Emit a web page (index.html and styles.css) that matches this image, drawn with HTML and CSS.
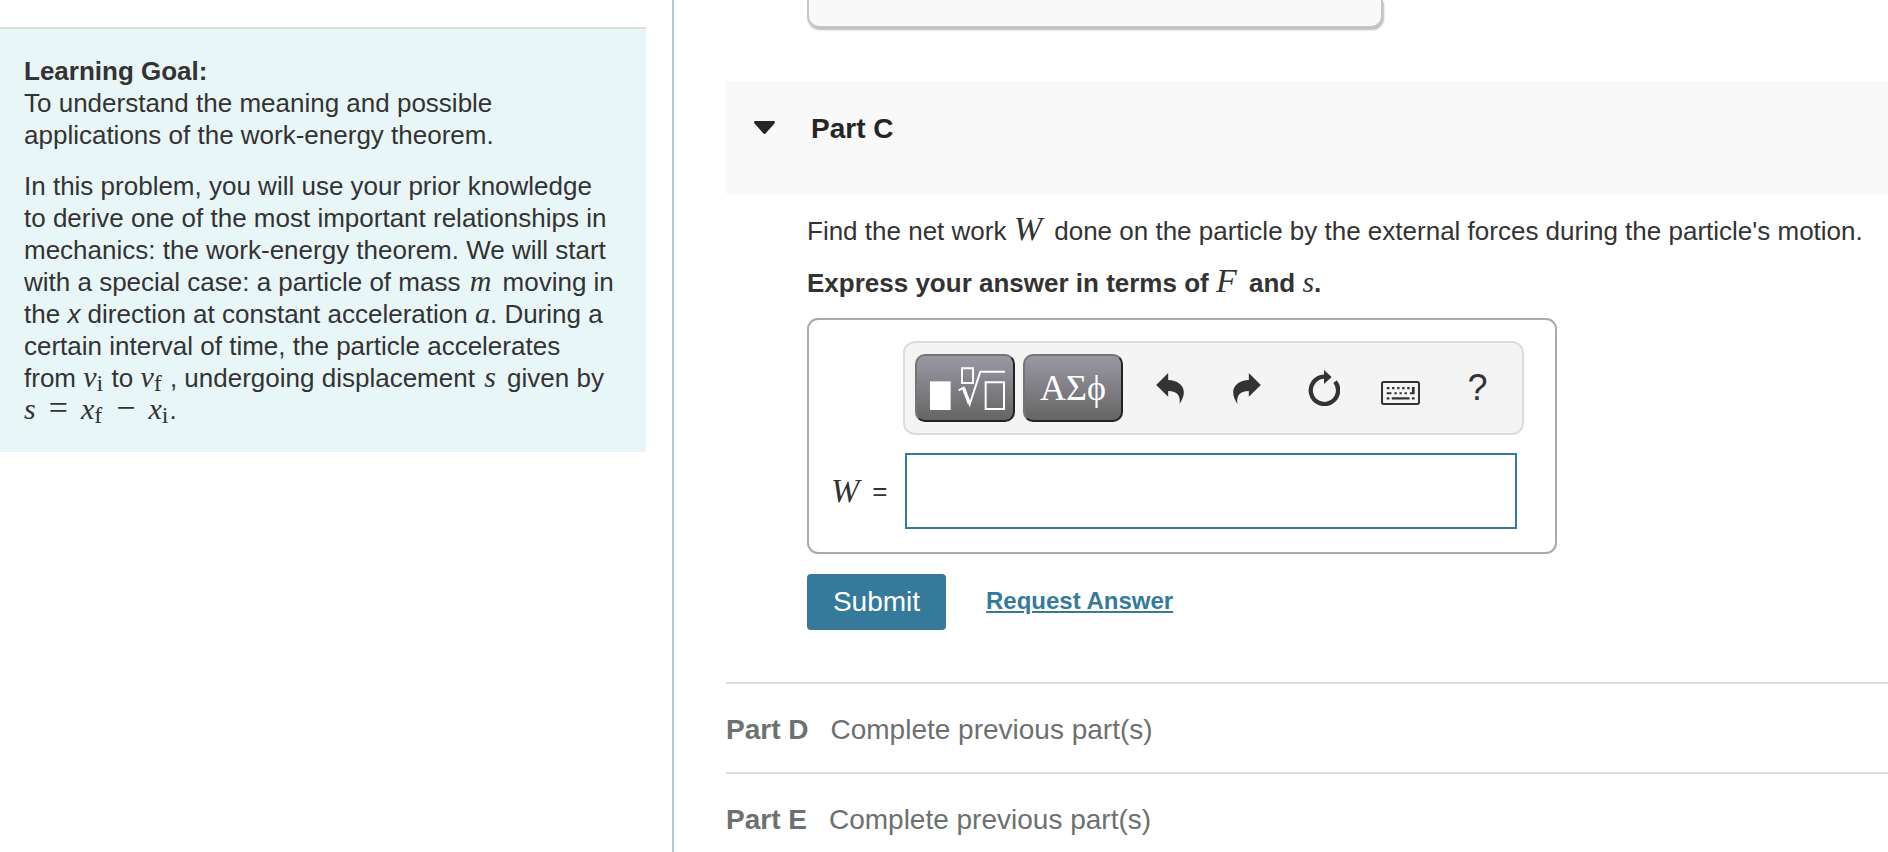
FILE: index.html
```html
<!DOCTYPE html>
<html lang="en">
<head>
<meta charset="utf-8">
<title>Work-Energy Theorem</title>
<link rel="stylesheet" href="styles.css">
</head>
<body>
<div class="layout">
  <aside class="sidebar">
    <section class="goal">
      <p><strong>Learning Goal:</strong><br>To understand the meaning and possible applications of the work-energy theorem.</p>
      <p>In this problem, you will use your prior knowledge to derive one of the most important relationships in mechanics: the work-energy theorem. We will start with a special case: a particle of mass <i class="math wide">m</i> moving in the <em>x</em> direction at constant acceleration <i class="math">a</i>. During a certain interval of time, the particle accelerates from <i class="math">v</i><span class="sub">i</span> to <i class="math">v</i><span class="sub">f</span> , undergoing displacement <i class="math wide">s</i> given by <span class="formula"><i class="math">s</i><span class="op">=</span><i class="math">x</i><span class="sub">f</span><span class="op">−</span><i class="math">x</i><span class="sub">i</span>.</span></p>
    </section>
  </aside>
  <main class="content">
    <div class="previous"></div>
    <header class="part-head">
      <svg class="caret" viewBox="0 0 21 13" aria-hidden="true"><path d="M1 0H20Q22 1 20 3L12 12Q10.500 14 9 12L1 3Q-1 1 1 0Z"/></svg>
      <h2>Part C</h2>
    </header>
    <form class="part-body">
      <p class="question">Find the net work <i class="math cap">W</i> done on the particle by the external forces during the particle's motion.</p>
      <p class="instruction"><strong>Express your answer in terms of <i class="math cap">F</i> and <i class="math">s</i>.</strong></p>
      <div class="answer">
        <div class="toolbar">
          <button type="button" class="key" aria-label="Templates">
            <svg class="templates" viewBox="0 0 225 129" aria-hidden="true">
              <path fill="#fff" d="M0 43H62V129H0Z"/>
              <path fill="none" stroke="#fff" stroke-width="6" d="M96 4H129V48H96ZM167 46H222V126H167Z"/>
              <path fill="none" stroke="#fff" stroke-width="6" d="M86 70L101 62L119 112L151 14H225"/>
              <path fill="none" stroke="#fff" stroke-width="10" d="M101 64L118 110"/>
            </svg>
          </button>
          <button type="button" class="key greek">ΑΣϕ</button>
          <button type="button" class="tool" aria-label="Undo"><svg width="28" height="31" viewBox="0 0 83 93"><path d="M0 36L36 0V21C62 22 83 36 83 58C83 70 78 82 70 93C74 70 64 54 36 54V71Z"/></svg></button>
          <button type="button" class="tool" aria-label="Redo"><svg width="28" height="31" viewBox="0 0 83 93"><path d="M83 36L47 0V21C21 22 0 36 0 58C0 70 5 82 13 93C9 70 19 54 47 54V71Z"/></svg></button>
          <button type="button" class="tool" aria-label="Reset"><svg width="32" height="36" viewBox="0 0 96 108"><path fill="none" stroke="#333" stroke-width="13" d="M81 35A41 41 0 1 1 48 20"/><path d="M48 0L71 21L48 42Z"/></svg></button>
          <button type="button" class="tool low" aria-label="Keyboard"><svg width="39" height="24" viewBox="0 0 116 71"><rect x="3" y="3" width="110" height="65" rx="5" fill="none" stroke="#333" stroke-width="6"/><path d="M17 18h8v6h-8zM33 18h7v6h-7zM48 18h7v6h-7zM63 18h7v6h-7zM78 18h7v6h-7zM92 18h8v21H86v-6h6zM17 33h14v6H17zM40 33h7v6h-7zM55 33h7v6h-7zM70 33h7v6h-7zM17 48h8v7h-8zM32 48h53v7H32zM92 48h8v7h-8z"/></svg></button>
          <button type="button" class="tool help" aria-label="Help">?</button>
        </div>
        <label class="field-label" for="work"><i class="math cap">W</i><span>=</span></label>
        <input id="work" class="field" type="text">
      </div>
      <div class="actions">
        <button type="submit" class="submit">Submit</button>
        <a class="request" href="#">Request Answer</a>
      </div>
    </form>
    <div class="locked"><strong>Part D</strong><span>Complete previous part(s)</span></div>
    <div class="locked"><strong>Part E</strong><span>Complete previous part(s)</span></div>
  </main>
</div>
</body>
</html>
```

FILE: styles.css
```css
* {
  box-sizing: border-box;
}

body {
  margin: 0;
  background: #fff;
  color: #333;
  font: 26px/32px "Liberation Sans", Arial, sans-serif;
}

p,
h2 {
  margin: 0;
}

.layout {
  display: grid;
  grid-template-columns: 674px 1fr;
  min-height: 100vh;
}

.sidebar {
  padding: 27px 26px 0 0;
  border-right: 2px solid #b9c6dc;
}

.goal {
  display: grid;
  gap: 19px;
  padding: 26px 30px 26px 24px;
  border-top: 2px solid #ddd;
  background: #e9f6f7;
}

.math {
  font: italic 400 30px/1 "Liberation Serif", "Times New Roman", serif;
  line-height: 0;
}

.wide {
  margin: 0 4px 0 2px;
}

.cap {
  margin-right: 5px;
  font-size: 34px;
}

.sub {
  margin-right: 1px;
  font: 24px/1 "Liberation Serif", "Times New Roman", serif;
  line-height: 0;
  vertical-align: -4px;
}

.formula {
  white-space: nowrap;
}

.op {
  margin: 0 13px;
  font: 34px/1 "Liberation Serif", "Times New Roman", serif;
  line-height: 0;
}

.content {
  min-width: 0;
  padding-left: 52px;
}

.previous {
  width: 576px;
  height: 28px;
  margin-left: 81px;
  border: 2px solid #c6c6c6;
  border-top: 0;
  border-radius: 0 0 12px 12px;
  background: #f9f9f9;
  box-shadow: 1px 2px 2px #bbb;
}

.part-head {
  display: flex;
  align-items: flex-start;
  height: 113px;
  margin-top: 53px;
  padding: 32px 28px;
  background: #f9f9f9;
  color: #252525;
}

.part-head h2 {
  margin-left: 36px;
  font-size: 28px;
  line-height: 32px;
}

.caret {
  width: 21px;
  height: 13px;
  margin-top: 8px;
  fill: #252525;
}

.part-body {
  padding: 21px 0 52px 81px;
}

.question {
  margin-bottom: 20px;
  white-space: nowrap;
}

.instruction {
  margin-bottom: 19px;
}

.answer {
  display: grid;
  grid-template-columns: 74px 612px;
  row-gap: 18px;
  align-items: center;
  width: 750px;
  padding: 21px 0 23px 22px;
  border: 2px solid #aaa;
  border-radius: 11px;
}

.toolbar {
  display: flex;
  grid-column: 2;
  align-items: center;
  width: 621px;
  height: 94px;
  margin-left: -2px;
  padding-left: 10px;
  border: 2px solid #dcdcdc;
  border-radius: 12px;
  background: #f4f4f4;
}

.key {
  flex: none;
  width: 100px;
  height: 68px;
  margin-right: 8px;
  padding: 0;
  border: 2px solid;
  border-color: #757575 #222 #222 #757575;
  border-radius: 10px;
  background: linear-gradient(#9b98a3, #656565);
  color: #fff;
}

.templates {
  display: block;
  width: 75px;
  height: 43px;
  margin-left: 13px;
}

.greek {
  font: 36px/40px "Liberation Serif", "Times New Roman", serif;
}

.tool {
  display: grid;
  flex: none;
  place-items: center;
  width: 77px;
  height: 68px;
  padding: 0;
  border: 0;
  background: none;
  color: #333;
  fill: #333;
}

.low {
  padding-top: 10px;
}

.help {
  font: 36px/40px "Liberation Sans", Arial, sans-serif;
}

.field-label {
  display: flex;
  align-items: center;
  gap: 8px;
}

.field {
  width: 612px;
  height: 76px;
  padding: 0 12px;
  border: 2px solid #367a9b;
  background: #fff;
  font: inherit;
}

.actions {
  display: flex;
  align-items: center;
  gap: 40px;
  margin-top: 20px;
}

.submit {
  width: 139px;
  height: 56px;
  border: 0;
  border-radius: 4px;
  background: #367a9b;
  color: #fff;
  font: 28px/32px "Liberation Sans", Arial, sans-serif;
}

.request {
  padding-bottom: 2px;
  color: #367a9b;
  font-size: 24px;
  font-weight: bold;
  text-decoration-thickness: 2px;
  text-underline-offset: 2px;
}

.locked {
  display: flex;
  gap: 22px;
  height: 90px;
  padding-top: 30px;
  border-top: 2px solid #ddd;
  color: #6c716f;
  font-size: 28px;
}
```
